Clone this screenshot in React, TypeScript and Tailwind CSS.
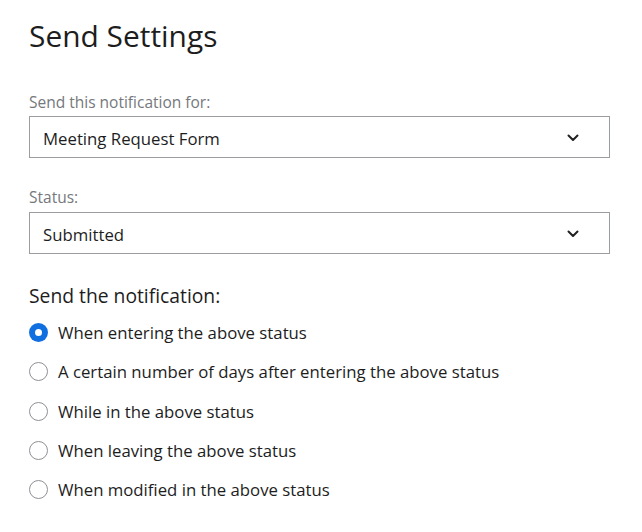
import React from "react";

const Chevron = () => (
  <svg width="12" height="8" viewBox="0 0 12 8" fill="none" className="shrink-0">
    <path d="M1.5 1.5 L6 6 L10.5 1.5" stroke="#222" strokeWidth="2" strokeLinecap="round" strokeLinejoin="round" />
  </svg>
);

const Select = ({ value }: { value: string }) => (
  <div className="flex h-[42px] w-[581px] items-center justify-between border border-[#9b9da1] bg-white pl-[13px] pr-[30px] text-[16.75px] text-[#1d1d1d]">
    <span className="pt-[3px]">{value}</span>
    <span className="pt-[2px]">
      <Chevron />
    </span>
  </div>
);

const Radio = ({ checked, label }: { checked?: boolean; label: string }) => (
  <div className="flex h-[39.25px] items-center gap-[10px]">
    {checked ? (
      <span className="flex h-[19px] w-[19px] items-center justify-center rounded-full bg-[#0f6fe0]">
        <span className="h-[7px] w-[7px] rounded-full bg-white" />
      </span>
    ) : (
      <span className="h-[19px] w-[19px] rounded-full border border-[#8e9094] bg-white" />
    )}
    <span className="text-[16.75px] text-[#1d1d1d]">{label}</span>
  </div>
);

export default function App() {
  return (
    <div className="min-h-[532px] w-[642px] bg-white pl-[29px] pt-[18px]" style={{ fontFamily: '"Open Sans", "Noto Sans", sans-serif' }}>
      <h1 className="text-[29.9px] leading-[36px] text-[#1d1d1d]">Send Settings</h1>
      <div className="mt-[38px] text-[15.5px] leading-[20px] text-[#75787c]">Send this notification for:</div>
      <div className="mt-[4px]">
        <Select value="Meeting Request Form" />
      </div>
      <div className="mt-[29px] text-[15.5px] leading-[20px] text-[#75787c]">Status:</div>
      <div className="mt-[5px]">
        <Select value="Submitted" />
      </div>
      <div className="mt-[30px] text-[19.3px] leading-[24px] text-[#1d1d1d]">Send the notification:</div>
      <div className="mt-[5px] flex flex-col">
        <Radio checked label="When entering the above status" />
        <Radio label="A certain number of days after entering the above status" />
        <Radio label="While in the above status" />
        <Radio label="When leaving the above status" />
        <Radio label="When modified in the above status" />
      </div>
    </div>
  );
}
